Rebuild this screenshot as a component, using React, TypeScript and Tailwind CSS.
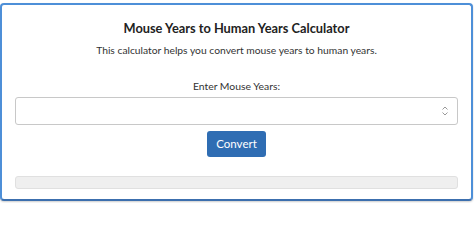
export default function App() {
  return (
    <div className="w-[474px] h-[203px] bg-white pt-[3px] font-['Lato',sans-serif]">
      <div className="w-[473px] h-[198px] rounded-[4px] border-2 border-[#4d8fd8] border-b-[#3c6fae] bg-white px-[13px] pt-[14px] shadow-[0_1px_2px_rgba(0,0,0,0.2)]">
        <h1 className="text-center text-[12.8px] font-bold leading-[18px] text-[#222]">
          Mouse Years to Human Years Calculator
        </h1>
        <p className="mt-[4px] text-center text-[10.3px] leading-[18px] text-[#333]">
          This calculator helps you convert mouse years to human years.
        </p>
        <label className="mt-[19px] block text-center text-[10.4px] leading-[16px] text-[#333]">
          Enter Mouse Years:
        </label>
        <div className="mt-[3px] flex h-[28px] items-center justify-end rounded-[3px] border border-[#c8c8c8] bg-white pr-[8px]">
          <svg width="8" height="12" viewBox="0 0 8 12" className="text-[#999]">
            <path d="M1.5 4.5 L4 2 L6.5 4.5 M1.5 7.5 L4 10 L6.5 7.5" fill="none" stroke="currentColor" strokeWidth="1" />
          </svg>
        </div>
        <div className="mt-[6px] flex justify-center">
          <button className="h-[26px] w-[59px] rounded-[3px] bg-[#2f6db3] text-[11.5px] text-white">
            Convert
          </button>
        </div>
        <div className="mt-[19px] h-[13px] rounded-[3px] border border-[#e0e0e0] bg-[#efefef]" />
      </div>
    </div>
  );
}
